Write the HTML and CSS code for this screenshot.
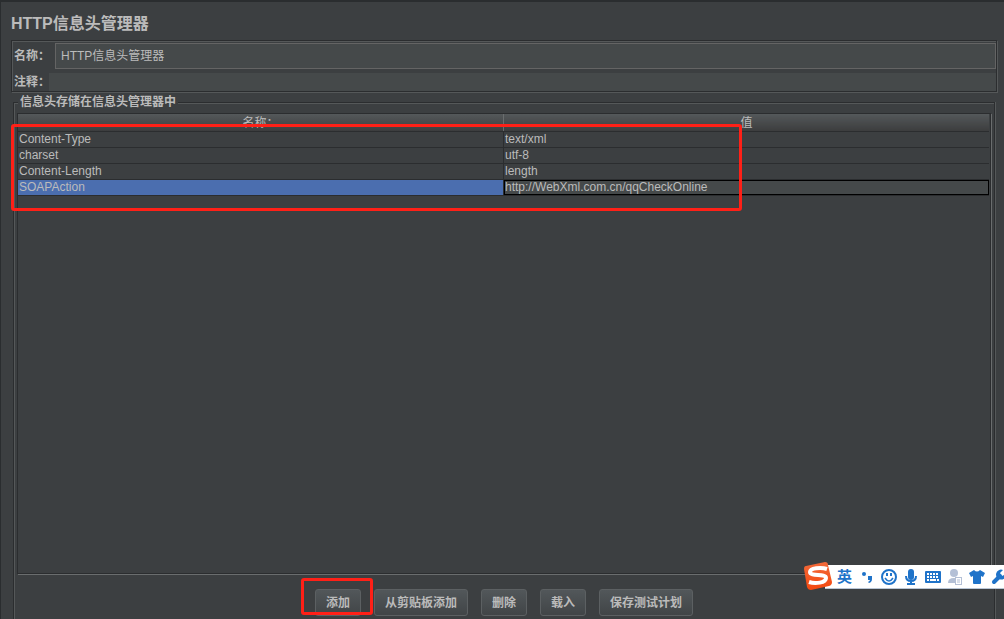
FILE: index.html
```html
<!DOCTYPE html>
<html lang="zh-CN">

<head>
    <meta charset="UTF-8">
    <meta name="viewport" content="width=device-width" />
    <title>HTTP信息头管理器</title>
    <link rel="stylesheet" href="styles.css">
</head>
<body>

    <h1>HTTP信息头管理器</h1>

    <div class="name-panel">
        <div class="field">
            <label for="name">名称：</label>
            <input id="name" class="outlined" type="text" value="HTTP信息头管理器">
        </div>
        <div class="field">
            <label for="comment">注释：</label>
            <input id="comment" type="text">
        </div>
    </div>

    <fieldset class="headers">
        <legend>信息头存储在信息头管理器中</legend>
        <div class="table-pane">
            <table>
                <thead>
                    <tr><th>名称：</th><th>值</th></tr>
                </thead>
                <tbody>
                    <tr><td>Content-Type</td><td>text/xml</td></tr>
                    <tr><td>charset</td><td>utf-8</td></tr>
                    <tr><td>Content-Length</td><td>length</td></tr>
                    <tr class="selected">
                        <td>SOAPAction</td>
                        <td class="editing"><input type="text" aria-label="值" value="http://WebXml.com.cn/qqCheckOnline"></td>
                    </tr>
                </tbody>
            </table>
            <div class="mark mark-rows"></div>
        </div>
        <div class="buttons">
            <div class="marked">
                <button type="button">添加</button>
                <div class="mark mark-add"></div>
            </div>
            <button type="button">从剪贴板添加</button>
            <button type="button">删除</button>
            <button type="button">载入</button>
            <button type="button">保存测试计划</button>
        </div>
    </fieldset>

    <!-- input method bar, floats over the window -->
    <div class="ime">
        <svg class="ime-logo" width="30" height="30" viewBox="0 0 30 30">
            <defs>
                <linearGradient id="logo-fill" x1="0" y1="0" x2="0" y2="1">
                    <stop offset="0" stop-color="#f26a3a" />
                    <stop offset="1" stop-color="#f4480f" />
                </linearGradient>
            </defs>
            <path d="M3 5 L22 1 Q25 1 25 4 L29 21 Q29 24 26 25 L8 29 Q5 29 4 26 L1 8 Q1 5 3 5 Z" fill="url(#logo-fill)" />
            <path d="M24 8 C18 6 7 7 7 11 C7 16 23 12 23 17 C23 22 12 23 6 21" fill="none" stroke="#fff" stroke-width="4" />
        </svg>
        <span class="ime-lang">英</span>
        <svg width="16" height="18" viewBox="0 0 16 18" fill="#1f73c9">
            <circle cx="4" cy="6" r="2" />
            <path d="M8 8 H12 V11 Q12 14 9 15 L8 14 Q10 13 10 12 H8 Z" />
        </svg>
        <svg width="18" height="18" viewBox="0 0 18 18" fill="none" stroke="#1f73c9" stroke-width="2">
            <circle cx="9" cy="9" r="7" />
            <path d="M5 10 Q9 16 13 10" stroke-width="1.5" />
            <path d="M7 5 V8 M11 5 V8" />
        </svg>
        <svg width="18" height="18" viewBox="0 0 18 18">
            <rect x="6" y="1" width="6" height="11" rx="3" fill="#1f73c9" />
            <path d="M4 8 Q4 13 9 13 Q14 13 14 8 M9 13 V16 M5 16 H13" fill="none" stroke="#1f73c9" stroke-width="2" />
        </svg>
        <svg width="18" height="18" viewBox="0 0 18 18">
            <rect x="1" y="3" width="16" height="12" rx="1" fill="#1f73c9" />
            <path d="M3 6 H15 M3 9 H15" stroke="#fff" stroke-width="2" stroke-dasharray="2 1" />
            <path d="M3 12 H5 M6 12 H12 M13 12 H15" stroke="#fff" stroke-width="2" />
        </svg>
        <svg width="18" height="18" viewBox="0 0 18 18">
            <circle cx="8" cy="5" r="4" fill="#b4c0d6" />
            <path d="M2 15 Q2 10 8 10 Q13 10 13 15 Z" fill="#b4c0d6" />
            <rect x="9.5" y="9.5" width="6" height="7" fill="#fff" stroke="#b4c0d6" />
            <path d="M11 12 H14 M11 14 H14" stroke="#b4c0d6" />
        </svg>
        <svg width="18" height="18" viewBox="0 0 18 18">
            <path d="M6 2 Q9 5 12 2 L17 5 L15 9 L13 8 V15 Q13 16 12 16 H6 Q5 16 5 15 V8 L3 9 L1 5 Z" fill="#1f73c9" />
        </svg>
        <svg width="18" height="18" viewBox="0 0 18 18">
            <path d="M4 14 L10 8" stroke="#1f73c9" stroke-width="4" stroke-linecap="round" />
            <path d="M13 2 A5 5 0 1 0 16 6 L12 8 L10 5 Z" fill="#1f73c9" />
        </svg>
    </div>

</body>
</html>
```
FILE: styles.css
```css
*,
*:before,
*:after {
    box-sizing: border-box;
}

body {
    margin: 0;
    height: 100vh;
    padding: 11px 6px 0 10px;
    border-top: 2px solid #2a2d2f;
    border-left: 1px solid #2a2d2f;
    overflow: hidden;
    position: relative;
    display: flex;
    flex-direction: column;
    background-color: #3c3f41;
    color: #bbb;
    font: 12px/16px "Liberation Sans", "Noto Sans CJK SC", sans-serif;
}

h1 {
    margin: 0 0 5px;
    font-size: 16px;
    line-height: 22px;
}

input {
    min-width: 0;
    margin: 0;
    border: 0;
    background: #45494a;
    color: #bbb;
    font: inherit;
    outline: none;
}

.name-panel {
    display: flex;
    flex-direction: column;
    gap: 3px;
    padding-top: 1px;
    border: 1px solid #2b2d2f;
    box-shadow: 1px 1px #555859, inset 1px 1px #555859;
    margin-right: 1px;
}

.field {
    display: flex;
    align-items: center;
    padding: 1px 0 0 2px;
}

.field label {
    width: 35px;
    font-weight: bold;
    white-space: nowrap;
}

.field input {
    flex: 1;
    height: 18px;
    padding: 0 5px;
}

.field .outlined {
    height: 26px;
    margin-left: 6px;
    padding-bottom: 3px;
    border: 1px solid #646464;
}

.headers {
    flex: 1;
    min-width: 0;
    margin: 2px 3px 0 2px;
    padding: 3px 3px 0;
    border: 1px solid #2b2d2f;
    border-bottom: 0;
    box-shadow: 1px 0 #555859, inset 1px 1px #555859;
    display: flex;
    flex-direction: column;
}

legend {
    padding: 0 2px;
    margin-left: 1px;
    background: #3c3f41;
    font-weight: bold;
}

.table-pane {
    position: relative;
    flex: 1;
    padding-right: 1px;
    border: 1px solid #2b2d2f;
    box-shadow: 1px 1px #6a6d6e;
}

table {
    width: 100%;
    table-layout: fixed;
    border-collapse: collapse;
}

th {
    height: 17px;
    padding: 1px 0 0;
    border-bottom: 1px solid #2b2d2f;
    background: linear-gradient(#54585a, #3c3d3e);
    font-weight: normal;
}

th + th {
    border-left: 1px solid #6a6d6e;
}

td {
    height: 16px;
    padding: 0 1px;
    border-bottom: 1px solid #2b2d2f;
    line-height: 15px;
}

td:first-child {
    border-right: 1px solid #2b2d2f;
}

.selected td:first-child {
    background: #4b6eaf;
}

td.editing {
    padding: 0;
}

.editing input {
    display: block;
    width: 100%;
    height: 15px;
    padding: 0;
    border: 1px solid #000;
}

.buttons {
    display: flex;
    justify-content: center;
    gap: 13px;
    padding: 15px 0 3px;
}

button {
    display: block;
    height: 27px;
    padding: 0 10px;
    border: 1px solid #5c6062;
    border-radius: 3px;
    background: linear-gradient(#52575a, #414547);
    color: #bbb;
    font: inherit;
    font-weight: bold;
}

.marked {
    position: relative;
}

/* red annotation frames */
.mark {
    position: absolute;
    border: 3px solid #ff2017;
    border-radius: 3px;
    pointer-events: none;
}

.mark-rows {
    top: 10px;
    left: -7px;
    width: calc(75% + 2px);
    height: 87px;
}

.mark-add {
    inset: -11px -12px 1px -14px;
}

.ime {
    position: absolute;
    right: -4px;
    bottom: 30px;
    height: 24px;
    display: flex;
    align-items: center;
    gap: 4px;
    padding-left: 12px;
    background: #fff;
    border-bottom: 1px solid #b9c6d6;
}

.ime-logo {
    position: absolute;
    left: -22px;
    top: -4px;
}

.ime-lang {
    margin-right: 4px;
    color: #1f73c9;
    font-size: 15px;
    font-weight: bold;
}
```
